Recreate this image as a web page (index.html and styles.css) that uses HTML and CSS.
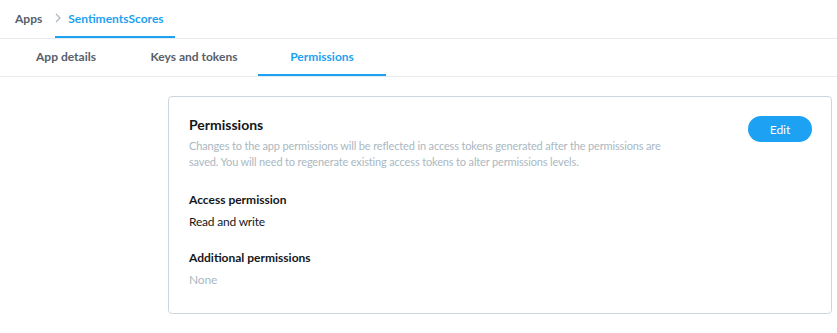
FILE: index.html
```html
<!DOCTYPE html>
<html lang="en">
  <head>
    <meta charset="UTF-8" />
    <meta name="viewport" content="width=device-width, initial-scale=1.0" />
    <title>SentimentsScores - Permissions</title>

    <link rel="stylesheet" href="styles.css">
  </head>
  <body>
    <nav class="breadcrumbs">
      <a class="crumb" href="#">Apps</a>
      <a class="crumb active" href="#">
        <svg class="chevron" width="6" height="10" viewBox="0 0 6 10">
          <path d="M1 1 L5 5 L1 9" fill="none" stroke="#aab8c2" stroke-width="1.2" />
        </svg>
        SentimentsScores
      </a>
    </nav>

    <nav class="tabs">
      <a class="tab" href="#">App details</a>
      <a class="tab" href="#">Keys and tokens</a>
      <a class="tab active" href="#">Permissions</a>
    </nav>

    <main class="content">
      <section class="card">
        <div class="card-header">
          <div>
            <h2>Permissions</h2>
            <p class="description">
              Changes to the app permissions will be reflected in access tokens generated after the permissions are
              saved. You will need to regenerate existing access tokens to alter permissions levels.
            </p>
          </div>
          <button class="edit-button">Edit</button>
        </div>

        <div class="field">
          <div class="label">Access permission</div>
          <div class="value">Read and write</div>
        </div>

        <div class="field">
          <div class="label">Additional permissions</div>
          <div class="value empty">None</div>
        </div>
      </section>
    </main>
  </body>
</html>
```

FILE: styles.css
```css
body {
  margin: 0;
  background: #fff;
  font-family: "Lato", "Noto Sans", sans-serif;
  font-size: 12px;
  color: #14171a;
}

a {
  text-decoration: none;
}

.breadcrumbs {
  display: flex;
  height: 38px;
  padding-left: 15px;
  border-bottom: 1px solid #e6ecf0;
}

.crumb {
  display: flex;
  align-items: center;
  gap: 7px;
  font-weight: bold;
  color: #57606a;
  margin-right: 13px;
  border-bottom: 2px solid transparent;
}

.crumb.active {
  color: #1da1f2;
  padding-right: 11px;
  border-bottom-color: #1da1f2;
}

.tabs {
  display: flex;
  height: 37px;
  padding-left: 2px;
  border-bottom: 1px solid #e6ecf0;
}

.tab {
  display: flex;
  align-items: center;
  justify-content: center;
  width: 128px;
  font-weight: bold;
  color: #57606a;
  border-bottom: 2px solid transparent;
}

.tab.active {
  color: #1da1f2;
  border-bottom-color: #1da1f2;
}

.content {
  padding: 19px 5px 0 168px;
}

.card {
  border: 1px solid #ccd6dd;
  border-radius: 4px;
  padding: 19px 19px 24px 20px;
}

.card-header {
  display: flex;
  justify-content: space-between;
  align-items: flex-start;
}

.card h2 {
  margin: 0;
  font-size: 14px;
  line-height: 18px;
}

.description {
  margin: 4px 0 0;
  max-width: 490px;
  color: #aab8c2;
  font-size: 11px;
  letter-spacing: -0.15px;
  line-height: 16px;
}

.edit-button {
  width: 64px;
  height: 26px;
  border: none;
  border-radius: 13px;
  background: #1da1f2;
  color: #fff;
  font-family: inherit;
  font-size: 12px;
}

.field {
  margin-top: 21px;
}

.field + .field {
  margin-top: 18px;
}

.field .label {
  font-weight: bold;
  line-height: 18px;
}

.field .value {
  margin-top: 4px;
  line-height: 18px;
  letter-spacing: -0.2px;
}

.field .value.empty {
  color: #aab8c2;
}
```
